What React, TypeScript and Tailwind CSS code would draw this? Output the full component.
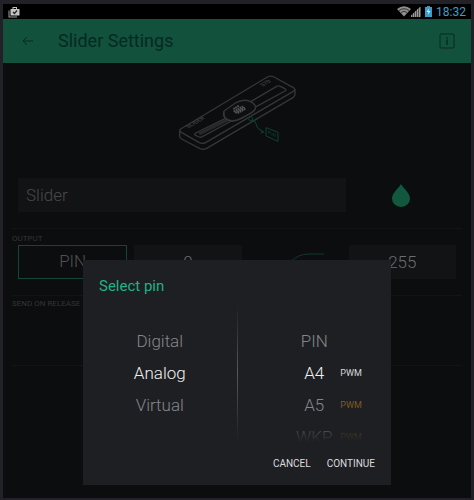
import { useState } from 'react';

const pinTypes = ['Digital', 'Analog', 'Virtual'];

const pins = [
  { name: 'PIN', pwm: false },
  { name: 'A4', pwm: true },
  { name: 'A5', pwm: true },
  { name: 'WKP', pwm: true },
];

function StatusBar() {
  return (
    <div className="flex h-[15px] items-center bg-black pl-[5px] pr-[5px]">
      <svg viewBox="0 0 24 24" className="h-3 w-3" aria-hidden>
        <path d="M1 9h2v12h15v2H1z" fill="#a0a0a0" />
        <path d="M5 6h4V2h9v4h5v13H5zM11 4v2h5V4z" fill="#c4c4c4" fillRule="evenodd" />
        <path d="M10 12l3 3 5-6" fill="none" stroke="#222" strokeWidth="2.4" />
      </svg>
      <div className="ml-auto flex items-center">
        <svg viewBox="0 0 28 22" className="h-[11px] w-[14px]" aria-hidden>
          <path d="M0 6Q14-5 28 6L14 21z" fill="#8f8f8f" />
          <path d="M4 9q10-7 20 0M8 13q6-5 12 0" fill="none" stroke="#1c1c1c" strokeWidth="1.6" />
        </svg>
        <svg viewBox="0 0 20 20" className="h-[10px] w-[10px]" aria-hidden>
          <path d="M0 20v-3l3-3v6zM4 20v-7l3-3v10zM8 20V9l3-3v14zM12 20V5l3-3v18zM16 20V1l3-1v20z" fill="#9a9a9a" />
        </svg>
        <svg viewBox="0 0 14 22" className="ml-1 h-[11px] w-[7px]" aria-hidden>
          <path d="M4 0h6v2h4v20H0V2h4z" fill="#3c9cc8" />
          <path d="M8 5l-5 7h4l-1 6 5-8H7z" fill="#d4edf8" />
        </svg>
        <span className="ml-1 pt-[2px] text-[12px] leading-[15px] text-[#3ba0cf]">18:32</span>
      </div>
    </div>
  );
}

function SliderDrawing() {
  return (
    <svg viewBox="-9 -6 480 306" className="mx-auto block h-[102px] w-[160px]" fill="none" stroke="#353639" strokeWidth="4" strokeLinejoin="round" aria-hidden>
      <path d="M62 192L322 36q10-5 20 0l58 32q8 5 0 11L138 232q-10 6-20 1L64 202q-8-5-2-10z" />
      <path d="M59 197v17q0 5 6 8l55 29q10 4 20-1L400 97q5-4 5-10V73" />
      <path d="M201 158L107 204q-6 4 0 7l10 5q5 2 10-1l87-47" />
      <path d="M114 203l86-43 8 7-88 44z" fill="#28292c" stroke="none" />
      <path d="M272 110l78-46q6-3 11 0l14 7q5 4 0 7l-92 50" />
      <path d="M192 138l34-24q24-14 46-4q18 10 14 22q-4 7-22 17l-20 11q-22 12-42 4q-16-8-10-26z" fill="#0e0f11" />
      <path d="M192 140v10q4 16 22 18q14 1 30-8l30-16q10-7 12-14" />
      <g stroke="#55565a" strokeWidth="6" strokeDasharray="5 2">
        <path d="M220 132l18-10M221 140l28-16M226 144l30-17M233 144l24-13" />
      </g>
      <g fill="#3b3c3f" stroke="none" fontFamily="Roboto, sans-serif" fontSize="18" fontWeight="700">
        <text transform="matrix(.86 -.5 .86 .5 86 190)">SLIDER</text>
        <text transform="matrix(.86 -.5 .86 .5 308 65)">370</text>
      </g>
      <g stroke="#0c4333" strokeWidth="3">
        <circle cx="272" cy="161" r="6" />
        <path d="M277 166l8 3 8 20 15 11" />
        <path d="M302 196l9 5-9 4" />
        <path d="M318 188l36 14v27l-36-16z" />
        <path d="M326 198v9m0-8q7 0 5 6M336 203v9m5-8v10m5-8v10" strokeWidth="2" />
      </g>
    </svg>
  );
}

function PickerItem({ label, active, onClick }: { label: string; active: boolean; onClick: () => void }) {
  return (
    <button
      type="button"
      aria-pressed={active}
      onClick={onClick}
      className={active ? 'text-center text-[#f0f0f0]' : 'text-center text-[#85868a]'}
    >
      {label}
    </button>
  );
}

function PinDialog() {
  const [type, setType] = useState('Analog');
  const [pin, setPin] = useState('A4');

  return (
    <div role="dialog" aria-labelledby="dialog-title" className="mx-auto w-[308px] bg-[#1e1f23] pb-[9px]">
      <h2 id="dialog-title" className="px-4 pt-[14px] text-[15px] leading-6 text-[#24b183]">Select pin</h2>
      <div className="mt-[7px] grid h-[147px] grid-cols-[1fr_1px_1fr] text-[17px] font-light leading-8">
        <div className="flex flex-col pt-5">
          {pinTypes.map((name) => (
            <PickerItem key={name} label={name} active={name === type} onClick={() => setType(name)} />
          ))}
        </div>
        <div className="mb-3 bg-linear-to-b from-transparent via-[#58595d] to-transparent" />
        <div className="relative pt-5">
          {pins.map((p) => (
            <div key={p.name} className="grid grid-cols-[1fr_44px_1fr] items-center">
              <span />
              <PickerItem label={p.name} active={p.name === pin} onClick={() => setPin(p.name)} />
              {p.pwm && (
                <span className={p.name === pin ? 'pl-1 text-[9px] font-normal text-[#d8d8d9]' : 'pl-1 text-[9px] font-normal text-[#7d5a20]'}>
                  PWM
                </span>
              )}
            </div>
          ))}
          <div className="pointer-events-none absolute inset-x-0 bottom-0 h-8 bg-linear-to-b from-[#1e1f23]/20 to-[#1e1f23] to-65%" />
        </div>
      </div>
      <div className="flex justify-end gap-4 px-4 text-[10px] leading-6 text-[#dcdcdd]">
        <button type="button">CANCEL</button>
        <button type="button">CONTINUE</button>
      </div>
    </div>
  );
}

export default function App() {
  const [name, setName] = useState('Slider');

  return (
    <div className="flex min-h-screen flex-col bg-[#222128] px-[3px] pb-[2px] pt-1 font-[Roboto,sans-serif]">
      <div className="relative flex flex-1 flex-col bg-[#0c0d0f]">
        <StatusBar />
        <header className="flex h-11 items-center bg-[#12513c] px-4 text-[#062a1f]">
          <button type="button" aria-label="Back" className="ml-[3px]">
            <svg viewBox="0 0 12 12" className="h-3 w-3" fill="none" stroke="currentColor" strokeWidth="1">
              <path d="M11 6H1M5 2L1 6l4 4" />
            </svg>
          </button>
          <h1 className="ml-6 text-[18px] leading-6">Slider Settings</h1>
          <button type="button" aria-label="Info" className="ml-auto">
            <svg viewBox="0 0 16 16" className="h-4 w-4" fill="none" stroke="currentColor">
              <rect x="1" y="1" width="14" height="14" rx="1" />
              <path d="M8 4v1.500M8 6.500V12" strokeWidth="1.4" />
            </svg>
          </button>
        </header>

        <main>
          <SliderDrawing />

          <section className="mx-[9px] flex items-center border-b border-[#131416] px-[6px] pb-4 pt-[13px]">
            <input
              aria-label="Name"
              value={name}
              onChange={(e) => setName(e.target.value)}
              className="h-[34px] min-w-0 flex-1 bg-[#121315] px-2 text-[17px] font-light text-[#48494c] outline-none"
            />
            <button type="button" aria-label="Color" className="flex w-[110px] justify-center">
              <svg viewBox="0 0 18 23" className="h-[23px] w-[18px]">
                <path d="M9 0C11 4 18 9 18 14.500A9 8.500 0 0 1 0 14.500C0 9 7 4 9 0z" fill="#12583f" />
              </svg>
            </button>
          </section>

          <section className="mx-[9px] border-b border-[#131416] pb-4">
            <h3 className="pt-[3px] text-[8px] leading-[13px] text-[#343538]">OUTPUT</h3>
            <div className="flex gap-[7px] px-[6px] text-[17px] font-light text-[#6b6c6f]">
              <button type="button" className="h-[34px] flex-1 border border-[#124735] text-[#505154]">PIN</button>
              <input aria-label="Minimum" defaultValue="0" className="h-[34px] min-w-0 flex-1 bg-[#121315] text-center outline-none" />
              <svg viewBox="0 0 93 34" className="h-[34px] w-[93px]" fill="none" stroke="#12382c" aria-hidden>
                <path d="M28 26C42 20 44 9 60 9h15" />
              </svg>
              <input aria-label="Maximum" defaultValue="255" className="h-[34px] min-w-0 flex-1 bg-[#121315] text-center outline-none" />
            </div>
          </section>

          <section className="mx-[9px] h-[70px] border-b border-[#131416]">
            <h3 className="pt-[1px] text-[8px] leading-[13px] text-[#343538]">SEND ON RELEASE</h3>
          </section>
        </main>

        <div className="absolute inset-x-0 bottom-[13px]">
          <PinDialog />
        </div>
      </div>
    </div>
  );
}
